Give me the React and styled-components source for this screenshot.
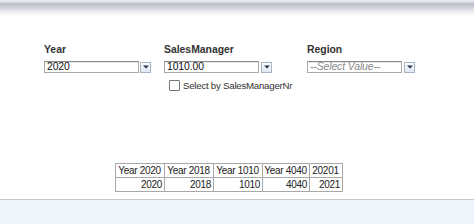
import React from 'react';
import styled, { createGlobalStyle } from 'styled-components';

const GlobalStyle = createGlobalStyle`
  html, body {
    margin: 0;
    padding: 0;
    background: #ffffff;
  }
  body {
    font-family: "Liberation Sans", Arial, sans-serif;
    color: #222;
  }
`

const Page = styled.div`
  width: 474px;
  height: 224px;
  display: flex;
  flex-direction: column;
  overflow: hidden;
`

const TopBar = styled.div`
  height: 16px;
  flex: none;
  background: linear-gradient(to bottom, #eceef2 0px, #dcdfe6 2px, #b7bbc7 4px, #cdd0d9 7px, #e9eaef 11px, #ffffff 16px);
`

const Content = styled.div`
  flex: 1;
  padding: 28px 0 0 44px;
  display: flex;
  flex-direction: column;
`

const Prompts = styled.div`
  display: flex;
  align-items: flex-start;
  gap: 13px;
`

const PromptGroup = styled.div`
  display: flex;
  flex-direction: column;
  width: ${p => p.$width}px;
`

const Label = styled.div`
  font-size: 10.4px;
  font-weight: bold;
  color: #333;
  height: 12px;
  line-height: 12px;
  margin-bottom: 5px;
`

const SelectRow = styled.div`
  display: flex;
  align-items: center;
  gap: ${p => p.$gap}px;
  height: 12px;
`

const SelectBox = styled.div`
  width: ${p => p.$width}px;
  height: 12px;
  box-sizing: border-box;
  border: 1px solid #a9a9a9;
  border-top-color: #8a8a8a;
  background: #fff;
  box-shadow: inset 0 1px 0 #e4e4e4;
  font-size: 10.4px;
  line-height: 10px;
  padding-left: 2px;
  color: ${p => (p.$placeholder ? '#8a8a8a' : '#111')};
  font-style: ${p => (p.$placeholder ? 'italic' : 'normal')};
  letter-spacing: -0.1px;
  white-space: nowrap;
  overflow: hidden;
`

const ArrowButton = styled.div`
  flex: none;
  width: 11px;
  height: 11px;
  box-sizing: border-box;
  border: 1px solid #a6b4c6;
  background: linear-gradient(to bottom, #ffffff, #dfe6ee);
  display: flex;
  align-items: center;
  justify-content: center;
`

const CheckRow = styled.label`
  display: flex;
  align-items: center;
  gap: 3px;
  margin-top: 7px;
  padding-left: 5px;
  font-size: 9.7px;
  letter-spacing: -0.25px;
  color: #333;
  white-space: nowrap;
`

const CheckBox = styled.span`
  flex: none;
  width: 11px;
  height: 11px;
  box-sizing: border-box;
  border: 1px solid #777;
  border-radius: 1px;
  background: #fff;
`

const TableWrap = styled.div`
  margin-top: 72px;
  margin-left: 71px;
`

const Grid = styled.table`
  border-collapse: collapse;
  table-layout: fixed;
  width: 227px;
  font-size: 10px;
  letter-spacing: -0.3px;
  color: #222;
`

const Cell = styled.td`
  border: 1px solid #a8a8a8;
  height: 14px;
  padding: 0 2px 0 1px;
  line-height: 12px;
  text-align: ${p => (p.$num ? 'right' : 'center')};
  white-space: nowrap;
  overflow: hidden;
  width: ${p => p.$w}px;
  box-sizing: border-box;
`

const Footer = styled.div`
  flex: none;
  height: 24px;
  border-top: 1px solid #c6c8cc;
  background: #eef4fc;
`

const Arrow = () => (
  <ArrowButton>
    <svg width="6" height="4" viewBox="0 0 6 4">
      <path d="M0 0.5 L6 0.5 L3 3.5 Z" fill="#1d3557" />
    </svg>
  </ArrowButton>
)

const Select = ({ width, gap, value, placeholder }) => (
  <SelectRow $gap={gap}>
    <SelectBox $width={width} $placeholder={placeholder}>{value}</SelectBox>
    <Arrow />
  </SelectRow>
)

const headers = ['Year 2020', 'Year 2018', 'Year 1010', 'Year 4040', '20201']
const values = ['2020', '2018', '1010', '4040', '2021']
const widths = [49, 49, 49, 47, 33]

export default function App() {
  return (
    <Page>
      <GlobalStyle />
      <TopBar />
      <Content>
        <Prompts>
          <PromptGroup $width={107}>
            <Label>Year</Label>
            <Select width={96} gap={1} value="2020" />
          </PromptGroup>
          <PromptGroup $width={130}>
            <Label>SalesManager</Label>
            <Select width={95} gap={2} value="1010.00" />
            <CheckRow>
              <CheckBox />
              Select by SalesManagerNr
            </CheckRow>
          </PromptGroup>
          <PromptGroup $width={110}>
            <Label>Region</Label>
            <Select width={95} gap={2} value="--Select Value--" placeholder />
          </PromptGroup>
        </Prompts>
        <TableWrap>
          <Grid>
            <tbody>
              <tr>
                {headers.map((h, i) => (
                  <Cell key={h} $w={widths[i]}>{h}</Cell>
                ))}
              </tr>
              <tr>
                {values.map((v, i) => (
                  <Cell key={i} $num $w={widths[i]}>{v}</Cell>
                ))}
              </tr>
            </tbody>
          </Grid>
        </TableWrap>
      </Content>
      <Footer />
    </Page>
  )
}
